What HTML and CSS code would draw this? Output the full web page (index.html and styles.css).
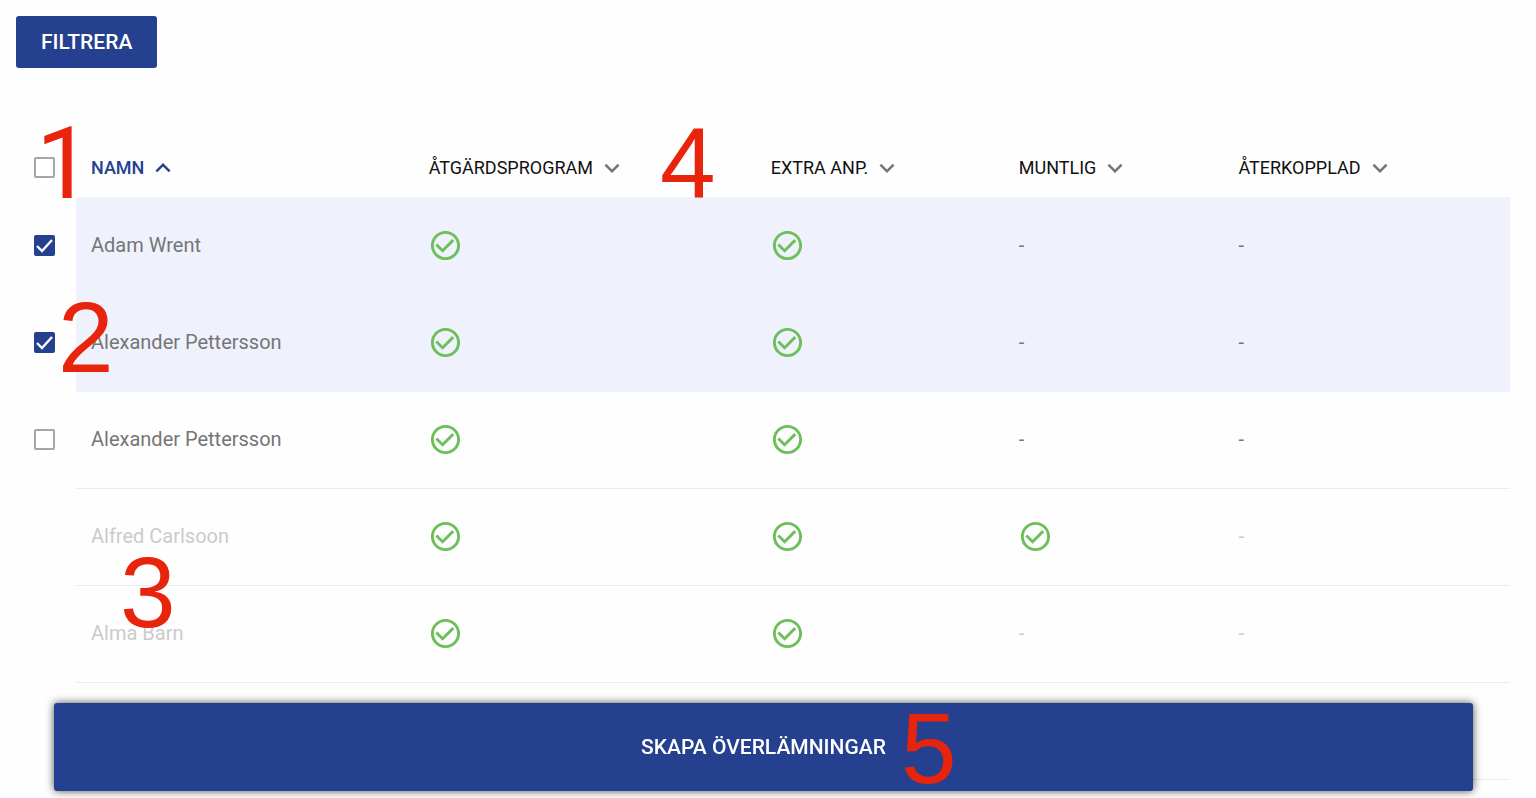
FILE: index.html
```html
<!DOCTYPE html>
<html lang="sv">
<head>
    <meta charset="utf-8">
    <title>Överlämningar</title>
    <meta name="viewport" content="width=device-width, initial-scale=1.0">
    <link rel="stylesheet" href="styles.css">
</head>
<body>
    <svg class="sprite" aria-hidden="true">
        <symbol id="up" viewBox="0 0 24 24"><path d="M12 8l-6 6 1.410 1.410L12 10.830l4.590 4.580L18 14z"/></symbol>
        <symbol id="down" viewBox="0 0 24 24"><path d="M16.590 8.590L12 13.170 7.410 8.590 6 10l6 6 6-6z"/></symbol>
        <symbol id="done" viewBox="0 0 24 24"><path d="M16.590 7.580L10 14.170l-3.590-3.580L5 12l5 5 8-8zM12 2C6.480 2 2 6.480 2 12s4.480 10 10 10 10-4.480 10-10S17.520 2 12 2zm0 18c-4.420 0-8-3.580-8-8s3.580-8 8-8 8 3.580 8 8-3.580 8-8 8z"/></symbol>
    </svg>

    <main class="page">
        <button class="filter-button" type="button">FILTRERA</button>

        <table class="students">
            <colgroup>
                <col class="col-check">
                <col class="col-name">
                <col class="col-program">
                <col class="col-extra">
                <col class="col-oral">
                <col>
            </colgroup>
            <thead>
                <tr>
                    <th class="check"><input type="checkbox" aria-label="Markera alla"></th>
                    <th><button class="sort active" type="button">NAMN <svg><use href="#up"/></svg></button></th>
                    <th><button class="sort" type="button">ÅTGÄRDSPROGRAM <svg><use href="#down"/></svg></button></th>
                    <th><button class="sort" type="button">EXTRA ANP. <svg><use href="#down"/></svg></button></th>
                    <th><button class="sort" type="button">MUNTLIG <svg><use href="#down"/></svg></button></th>
                    <th><button class="sort" type="button">ÅTERKOPPLAD <svg><use href="#down"/></svg></button></th>
                </tr>
            </thead>
            <tbody>
                <tr class="selected">
                    <td class="check"><input type="checkbox" id="row1" checked></td>
                    <td><label for="row1">Adam Wrent</label></td>
                    <td><svg class="done"><use href="#done"/></svg></td>
                    <td><svg class="done"><use href="#done"/></svg></td>
                    <td>-</td>
                    <td>-</td>
                </tr>
                <tr class="selected">
                    <td class="check"><input type="checkbox" id="row2" checked></td>
                    <td><label for="row2">Alexander Pettersson</label></td>
                    <td><svg class="done"><use href="#done"/></svg></td>
                    <td><svg class="done"><use href="#done"/></svg></td>
                    <td>-</td>
                    <td>-</td>
                </tr>
                <tr>
                    <td class="check"><input type="checkbox" id="row3"></td>
                    <td><label for="row3">Alexander Pettersson</label></td>
                    <td><svg class="done"><use href="#done"/></svg></td>
                    <td><svg class="done"><use href="#done"/></svg></td>
                    <td>-</td>
                    <td>-</td>
                </tr>
                <tr class="disabled">
                    <td class="check"></td>
                    <td>Alfred Carlsoon</td>
                    <td><svg class="done"><use href="#done"/></svg></td>
                    <td><svg class="done"><use href="#done"/></svg></td>
                    <td><svg class="done"><use href="#done"/></svg></td>
                    <td>-</td>
                </tr>
                <tr class="disabled">
                    <td class="check"></td>
                    <td>Alma Barn</td>
                    <td><svg class="done"><use href="#done"/></svg></td>
                    <td><svg class="done"><use href="#done"/></svg></td>
                    <td>-</td>
                    <td>-</td>
                </tr>
                <tr class="disabled">
                    <td class="check"></td>
                    <td></td>
                    <td></td>
                    <td></td>
                    <td></td>
                    <td></td>
                </tr>
            </tbody>
        </table>
    </main>

    <button class="create-button" type="button">SKAPA ÖVERLÄMNINGAR</button>

    <!-- Numbered markers on top of the view -->
    <span class="marker marker-1">1</span>
    <span class="marker marker-2">2</span>
    <span class="marker marker-3">3</span>
    <span class="marker marker-4">4</span>
    <span class="marker marker-5">5</span>
</body>
</html>
```
FILE: styles.css
```css
/* General styling */
* {
    box-sizing: border-box;
}
body {
    margin: 0;
    background: #fefefe;
    font-family: Roboto, "Liberation Sans", sans-serif;
    font-size: 20px;
    color: #757575;
}
button {
    border: none;
    font-family: inherit;
    cursor: pointer;
}
.sprite {
    display: none;
}
.page {
    padding: 16px 26px 0 16px;
}

/* Buttons */
.filter-button {
    display: block;
    height: 52px;
    padding: 0 25px;
    border-radius: 3px;
    background: #24408e;
    color: #fff;
    font-size: 21px;
    font-weight: 500;
}
.create-button {
    position: fixed;
    left: 54px;
    right: 63px;
    bottom: 7px;
    height: 88px;
    border-radius: 3px;
    background: #24408e;
    box-shadow: 0 0 9px rgba(0, 0, 0, 0.7);
    color: #fff;
    font-size: 21px;
    font-weight: 500;
}

/* Table */
.students {
    width: 100%;
    margin-top: 71px;
    table-layout: fixed;
    border-collapse: separate;
    border-spacing: 0;
}
.col-check {
    width: 60px;
}
.col-name {
    width: 22.6%;
}
.col-program {
    width: 22.9%;
}
.col-extra {
    width: 16.6%;
}
.col-oral {
    width: 14.7%;
}
th {
    height: 58px;
    padding: 0 0 1px 15px;
    text-align: left;
}
td {
    height: 97px;
    padding: 0 0 2px 15px;
    border-top: 1px solid #ececec;
}
tr:last-child td {
    height: 98px;
    border-bottom: 1px solid #ececec;
}
.selected td,
.selected + tr td {
    border-top-color: #eff2fc;
}
.selected td:not(.check) {
    background: #eff2fc;
}
.students .check {
    padding-left: 18px;
    border-color: transparent;
}
.disabled td {
    color: #cbcbcb;
}

/* Sort headings */
.sort {
    display: flex;
    align-items: center;
    gap: 4px;
    padding: 0;
    background: none;
    color: #111;
    font-size: 18px;
    white-space: nowrap;
}
.sort svg {
    width: 30px;
    height: 30px;
    fill: #757575;
}
.sort.active {
    color: #24408e;
    font-weight: 500;
}
.sort.active svg {
    fill: #24408e;
}

/* Status icon */
.done {
    display: block;
    width: 35px;
    height: 35px;
    margin-left: -1px;
    fill: #6cbf5b;
}

/* Checkboxes */
input[type="checkbox"] {
    display: block;
    appearance: none;
    width: 21px;
    height: 21px;
    margin: 0;
    border: 2px solid #a6a6a6;
    border-radius: 2px;
    background: #fff;
}
input[type="checkbox"]:checked {
    border-color: #24408e;
    background: #24408e url("data:image/svg+xml,%3Csvg xmlns='http://www.w3.org/2000/svg' viewBox='0 0 17 17'%3E%3Cpath d='M1 9l5 5L16 3' fill='none' stroke='white' stroke-width='2.4'/%3E%3C/svg%3E") center / 17px 17px no-repeat;
}

/* Markers */
.marker {
    position: absolute;
    color: #e8240c;
    font-family: "Liberation Sans", Arial, sans-serif;
    font-size: 100px;
    line-height: 100px;
    pointer-events: none;
}
.marker-1 {
    left: 36px;
    top: 114px;
    font-family: Roboto, sans-serif;
}
.marker-2 {
    left: 58px;
    top: 287px;
}
.marker-3 {
    left: 120px;
    top: 542px;
}
.marker-4 {
    left: 660px;
    top: 113px;
}
.marker-5 {
    left: 901px;
    top: 698px;
}
```
